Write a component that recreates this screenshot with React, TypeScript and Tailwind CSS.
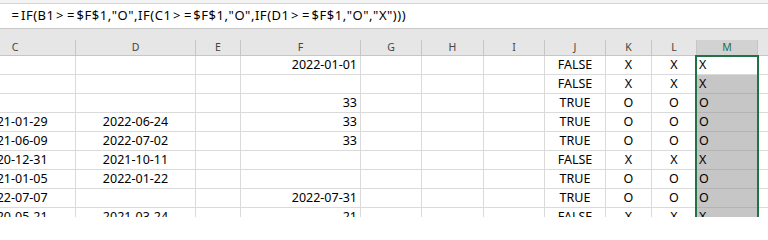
const columns = [
  { key: 'C', width: 'w-[121px]', align: 'justify-center' },
  { key: 'D', width: 'w-[120px]', align: 'justify-center' },
  { key: 'E', width: 'w-[45px]', align: 'justify-center' },
  { key: 'F', width: 'w-[120px]', align: 'justify-end pr-[3px]' },
  { key: 'G', width: 'w-[61px]', align: 'justify-center' },
  { key: 'H', width: 'w-[62px]', align: 'justify-center' },
  { key: 'I', width: 'w-[61px]', align: 'justify-center' },
  { key: 'J', width: 'w-[61px]', align: 'justify-center' },
  { key: 'K', width: 'w-[46px]', align: 'justify-center' },
  { key: 'L', width: 'w-[45px]', align: 'justify-center' },
  { key: 'M', width: 'w-[61px]', align: 'justify-start pl-[2px]' },
  { key: 'N', width: 'w-[60px]', align: 'justify-center' },
]

type Row = Record<string, string>

const rows: Row[] = [
  { F: '2022-01-01', J: 'FALSE', K: 'X', L: 'X', M: 'X' },
  { J: 'FALSE', K: 'X', L: 'X', M: 'X' },
  { F: '33', J: 'TRUE', K: 'O', L: 'O', M: 'O' },
  { C: '2021-01-29', D: '2022-06-24', F: '33', J: 'TRUE', K: 'O', L: 'O', M: 'O' },
  { C: '2021-06-09', D: '2022-07-02', F: '33', J: 'TRUE', K: 'O', L: 'O', M: 'O' },
  { C: '2020-12-31', D: '2021-10-11', J: 'FALSE', K: 'X', L: 'X', M: 'X' },
  { C: '2021-01-05', D: '2022-01-22', J: 'TRUE', K: 'O', L: 'O', M: 'O' },
  { C: '2022-07-07', F: '2022-07-31', J: 'TRUE', K: 'O', L: 'O', M: 'O' },
  { C: '2020-05-21', D: '2021-03-24', F: '21', J: 'FALSE', K: 'X', L: 'X', M: 'X' },
]

const formula = '=IF(B1>=$F$1,"O",IF(C1>=$F$1,"O",IF(D1>=$F$1,"O","X")))'

// the formula bar font draws > and = wide, with air around them
const FormulaText = () => (
  <span className="whitespace-pre">
    {formula.split('').map((ch, i) =>
      ch === '>' || ch === '=' ? (
        <span key={i} className="px-[1.5px]">
          {ch}
        </span>
      ) : (
        <span key={i}>{ch}</span>
      )
    )}
  </span>
)

export default function App() {
  return (
    <div
      className="relative h-[217px] w-[768px] overflow-hidden bg-white text-black"
      style={{ fontFamily: '"Noto Sans", "Open Sans", sans-serif' }}
    >
      {/* formula bar */}
      <div className="h-[4px] border-b border-[#d6d6d6] bg-[#f3f3f3]" />
      <div className="flex h-[25px] items-center border-b border-[#c8c8c8] bg-white pl-[10px] text-[13px] tracking-[0.52px]">
        <FormulaText />
      </div>

      {/* column headers */}
      <div className="h-[11px] bg-[#e6e6e6]" />
      <div className="ml-[-45px] flex h-[15px] bg-[#e6e6e6] text-[10.5px] text-[#444]">
        {columns.map((col) => (
          <div
            key={col.key}
            className={`flex shrink-0 items-center justify-center border-r border-[#c6c6c6] ${col.width} ${
              col.key === 'M' ? 'bg-[#d2d2d2] text-[#217346]' : ''
            }`}
          >
            {col.key === 'N' ? '' : col.key}
          </div>
        ))}
      </div>
      <div className="h-[1px] bg-[#c6c6c6]" />

      {/* grid */}
      <div className="ml-[-45px] text-[12.5px]">
        {rows.map((row, i) => (
          <div key={i} className="flex h-[19px]">
            {columns.map((col) => {
              const selected = col.key === 'M' && i > 0
              return (
                <div
                  key={col.key}
                  className={`flex shrink-0 items-center border-r border-b ${col.width} ${col.align} ${
                    selected ? 'border-b-[#b4b4b4] bg-[#c6c6c6] border-r-[#c6c6c6]' : 'border-[#dadada]'
                  }`}
                >
                  {row[col.key] ?? ''}
                </div>
              )
            })}
          </div>
        ))}
      </div>

      {/* active selection outline */}
      <div className="absolute left-[695px] top-[55px] h-[170px] w-[64px] border-2 border-[#217346]" />
    </div>
  )
}
